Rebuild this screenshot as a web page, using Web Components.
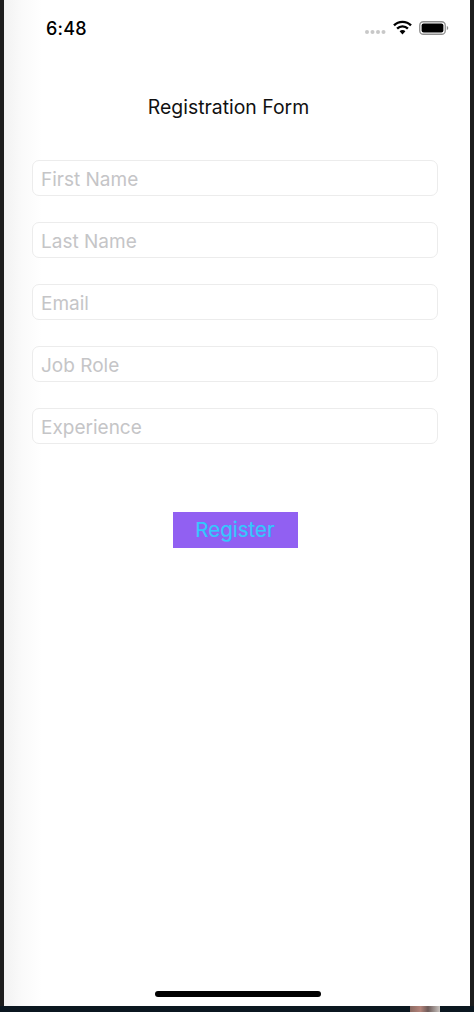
<!DOCTYPE html>
<html lang="en">
<head>
<meta charset="utf-8">
<title>Registration Form</title>
<style>
  html, body { margin: 0; height: 100%; }
  body {
    background: #1d1d1d;
    font-family: Inter, "Liberation Sans", sans-serif;
    overflow: hidden;
  }
</style>
</head>
<body>
<phone-frame>
  <status-bar time="6:48"></status-bar>
  <registration-form>
    <form-field>First Name</form-field>
    <form-field>Last Name</form-field>
    <form-field>Email</form-field>
    <form-field>Job Role</form-field>
    <form-field>Experience</form-field>
  </registration-form>
</phone-frame>

<script>
class PhoneFrame extends HTMLElement {
  constructor() {
    super();
    this.attachShadow({ mode: "open" });
    this.shadowRoot.innerHTML = `
      <style>
        :host {
          display: flex;
          flex-direction: column;
          height: 1012px;
        }
        .screen {
          flex: 1;
          margin: 0 4px;
          display: flex;
          flex-direction: column;
          background: linear-gradient(to right, #f2f2f2 0, #fafafa 18px, #fff 38px);
        }
        .content { flex: 1; }
        .home {
          display: flex;
          justify-content: center;
          padding: 0 0 9px 1px;
        }
        .home i {
          width: 166px;
          height: 6px;
          border-radius: 3px;
          background: #000;
        }
        .dock {
          height: 6px;
          display: flex;
          justify-content: flex-end;
          padding-right: 34px;
          background: #0b1720;
        }
        .thumb {
          width: 30px;
          background: linear-gradient(to right, #8a6a62 0, #b3837a 35%, #6d5a58 60%, #c9c4c0 100%);
        }
      </style>
      <div class="screen">
        <div class="content"><slot></slot></div>
        <div class="home"><i></i></div>
      </div>
      <div class="dock"><div class="thumb"></div></div>
    `;
  }
}

class StatusBar extends HTMLElement {
  constructor() {
    super();
    this.attachShadow({ mode: "open" });
  }

  connectedCallback() {
    this.shadowRoot.innerHTML = `
      <style>
        :host {
          display: flex;
          align-items: center;
          height: 56px;
          padding: 0 21px 0 42px;
          color: #000;
        }
        .time {
          font: 500 18px/1 Inter, "Liberation Sans", sans-serif;
          letter-spacing: 0.2px;
          padding-top: 2px;
        }
        .icons {
          margin-left: auto;
          display: flex;
          align-items: center;
          gap: 7px;
          margin-top: -1px;
        }
        svg { display: block; }
      </style>
      <span class="time">${this.getAttribute("time")}</span>
      <div class="icons">
        <svg width="21" height="4" viewBox="0 0 21 4" style="margin-top:9px">
          <g fill="#c8c8c8">
            <circle cx="2" cy="2" r="2"/><circle cx="7.5" cy="2" r="2"/>
            <circle cx="13" cy="2" r="2"/><circle cx="18.5" cy="2" r="2"/>
          </g>
        </svg>
        <svg width="19" height="15" viewBox="0 0 19 15" style="margin-top:-1px">
          <g fill="none" stroke="#000" stroke-width="2.4">
            <path d="M1 5.4a12 12 0 0 1 17 0"/>
            <path d="M4.1 8.6a7.7 7.7 0 0 1 10.8 0"/>
          </g>
          <path d="M6.6 11.2a4 4 0 0 1 5.8 0L9.5 14.4z" fill="#000"/>
        </svg>
        <svg width="30" height="14" viewBox="0 0 30 14">
          <rect x=".75" y=".75" width="25.5" height="12.5" rx="3.6" fill="none" stroke="#8e8e8e" stroke-width="1.3"/>
          <rect x="2.6" y="2.6" width="21.8" height="8.8" rx="2" fill="#000"/>
          <path d="M27.8 5v4c.9-.3 1.4-1 1.4-2s-.5-1.7-1.4-2z" fill="#8e8e8e"/>
        </svg>
      </div>
    `;
  }
}

class RegistrationForm extends HTMLElement {
  constructor() {
    super();
    this.attachShadow({ mode: "open" });
    this.shadowRoot.innerHTML = `
      <style>
        :host {
          display: flex;
          flex-direction: column;
          padding: 37px 32px 0 28px;
        }
        h1 {
          margin: 0 13px 39px 0;
          font: 400 19.4px/28px Inter, "Liberation Sans", sans-serif;
          text-align: center;
          color: #111;
        }
        .fields {
          display: flex;
          flex-direction: column;
          gap: 26px;
        }
        button {
          align-self: center;
          width: 125px;
          height: 36px;
          margin-top: 68px;
          padding: 0;
          border: 0;
          background: #9160f2;
          color: #33c8fd;
          font: 400 20.5px/36px Inter, "Liberation Sans", sans-serif;
          -webkit-text-stroke: 0.2px #33c8fd;
        }
      </style>
      <h1>Registration Form</h1>
      <div class="fields"><slot></slot></div>
      <button type="button">Register</button>
    `;
  }
}

class FormField extends HTMLElement {
  constructor() {
    super();
    this.attachShadow({ mode: "open" });
    this.shadowRoot.innerHTML = `
      <style>
        :host {
          display: flex;
          align-items: center;
          box-sizing: border-box;
          height: 36px;
          padding: 2px 8px 0;
          border: 1px solid #ececec;
          border-radius: 7px;
          background: #fff;
          color: #c5c5c7;
          font: 400 19px/1 Inter, "Liberation Sans", sans-serif;
        }
      </style>
      <slot></slot>
    `;
  }
}

customElements.define("phone-frame", PhoneFrame);
customElements.define("status-bar", StatusBar);
customElements.define("registration-form", RegistrationForm);
customElements.define("form-field", FormField);
</script>
</body>
</html>
